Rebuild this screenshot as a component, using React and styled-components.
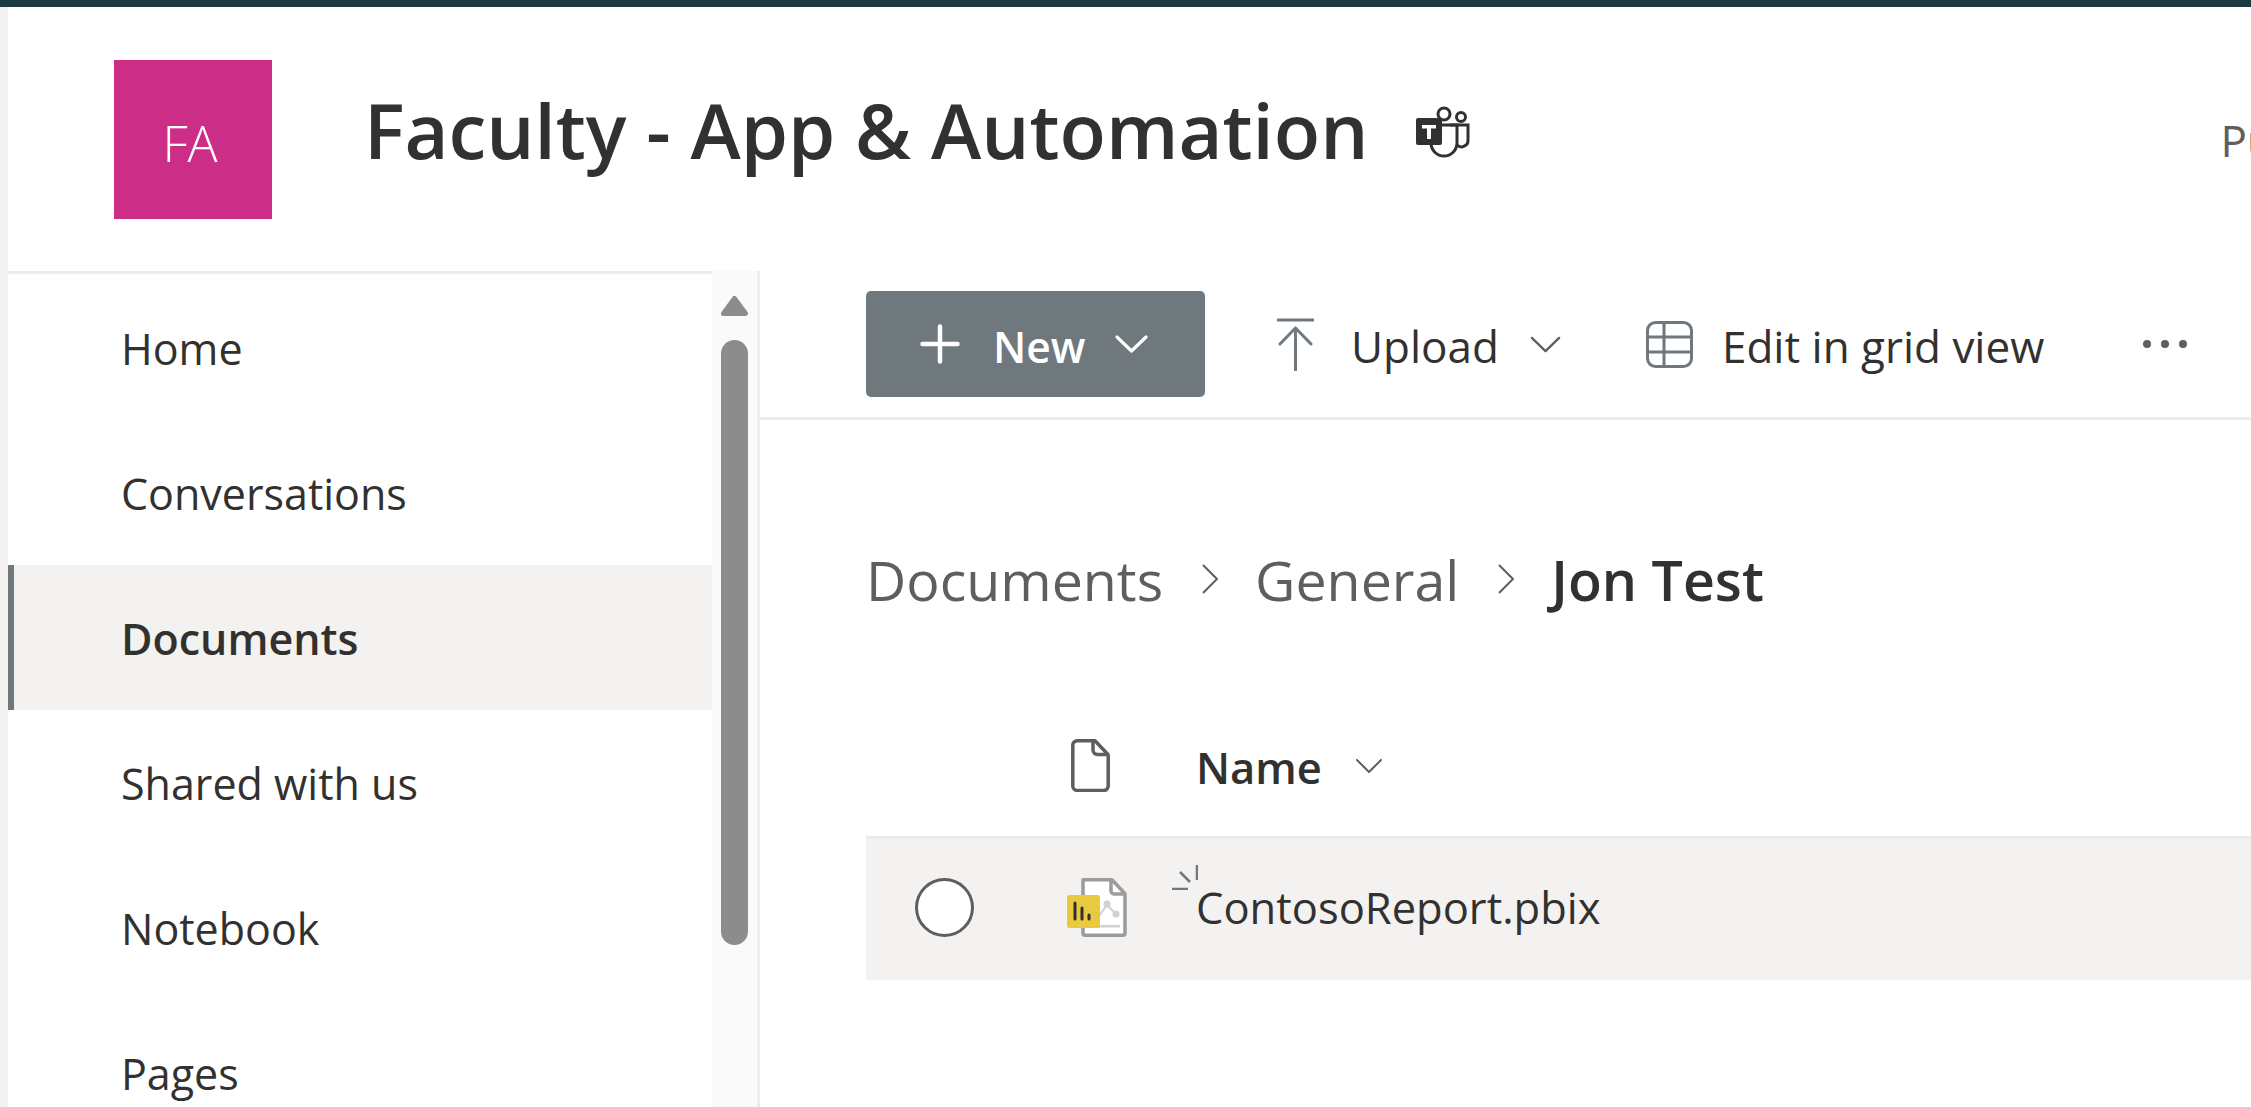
import React from 'react'
import styled, { createGlobalStyle } from 'styled-components'

const GlobalStyle = createGlobalStyle`
  html, body { margin: 0; padding: 0; background: #fff; }
  body { font-family: 'Open Sans', 'Noto Sans', sans-serif; color: #323130; }
`

const navItems = ['Home', 'Conversations', 'Documents', 'Shared with us', 'Notebook', 'Pages']

const Page = styled.div`
  width: 2251px;
  height: 1107px;
  overflow: hidden;
  border-top: 7px solid #1b3a42;
  box-sizing: border-box;
  display: flex;
  background: #fff;
`
const LeftStrip = styled.div`
  width: 8px;
  flex-shrink: 0;
  background: #f3f2f1;
`
const Shell = styled.div`
  flex: 1;
  min-width: 0;
  display: flex;
  flex-direction: column;
`
const Header = styled.header`
  height: 264px;
  flex-shrink: 0;
  display: flex;
  align-items: flex-start;
  padding: 53px 0 0 106px;
  box-sizing: border-box;
  white-space: nowrap;
  overflow: hidden;
`
const Logo = styled.div`
  width: 158px;
  height: 159px;
  flex-shrink: 0;
  box-sizing: border-box;
  padding: 6px 6px 0 0;
  background: #cc2e87;
  color: #fff;
  font-size: 50px;
  font-weight: 300;
  display: flex;
  align-items: center;
  justify-content: center;
`
const Title = styled.h1`
  margin: 21px 0 0 92px;
  font-size: 76px;
  line-height: 98px;
  font-weight: 600;
`
const TeamsIcon = styled.svg`
  width: 56px;
  height: 53px;
  margin: 45px 0 0 46px;
  flex-shrink: 0;
`
const GroupLabel = styled.span`
  margin: 53px 0 0 750px;
  font-size: 44px;
  line-height: 54px;
  color: #605e5c;
`
const Body = styled.div`
  flex: 1;
  min-height: 0;
  display: flex;
`
const Sidebar = styled.nav`
  width: 704px;
  flex-shrink: 0;
  border-top: 3px solid #ececec;
  padding-top: 1px;
`
const NavItem = styled.div`
  height: 145px;
  box-sizing: border-box;
  padding-top: 2px;
  display: flex;
  align-items: center;
  padding-left: ${(p) => (p.$active ? '107px' : '113px')};
  border-left: ${(p) => (p.$active ? '6px solid #6e787d' : 'none')};
  background: ${(p) => (p.$active ? '#f3f2f1' : 'transparent')};
  font-size: 43px;
  font-weight: ${(p) => (p.$active ? 600 : 400)};
`
const ScrollTrack = styled.div`
  width: 45px;
  flex-shrink: 0;
  background: #fafafa;
  border-right: 3px solid #eeeeee;
  display: flex;
  flex-direction: column;
  align-items: center;
  padding-top: 24px;
  gap: 24px;
`
const ScrollArrow = styled.svg`
  width: 27px;
  height: 21px;
  flex-shrink: 0;
`
const ScrollThumb = styled.div`
  width: 27px;
  height: 605px;
  flex-shrink: 0;
  background: #8c8c8c;
  border-radius: 14px;
`
const Main = styled.main`
  flex: 1;
  min-width: 0;
`
const Toolbar = styled.div`
  height: 149px;
  box-sizing: border-box;
  border-bottom: 3px solid #ececec;
  display: flex;
  align-items: flex-start;
  padding: 20px 0 0 106px;
  white-space: nowrap;
`
const NewButton = styled.button`
  width: 339px;
  height: 106px;
  border: none;
  border-radius: 5px;
  background: #6e787d;
  color: #fff;
  font: 600 42.5px 'Open Sans', sans-serif;
  display: flex;
  align-items: center;
  padding: 0 0 0 54px;
  box-sizing: border-box;
`
const NewLabel = styled.span`
  margin: 0 30px 0 33px;
  padding-top: 4px;
`
const ToolIcon = styled.svg`
  flex-shrink: 0;
  display: block;
`
const ToolAction = styled.div`
  height: 106px;
  display: flex;
  align-items: center;
  margin-left: ${(p) => p.$left}px;
  font-size: 44px;
  color: #323130;
`
const ToolText = styled.span`
  margin: 0 ${(p) => p.$right || 0}px 0 ${(p) => p.$left}px;
  padding-top: 4px;
`
const Dots = styled.div`
  height: 106px;
  margin-left: 99px;
  display: flex;
  align-items: center;
  gap: 10px;
`
const Dot = styled.span`
  width: 8px;
  height: 8px;
  border-radius: 50%;
  background: #605e5c;
`
const Breadcrumb = styled.div`
  height: 116px;
  margin-top: 101px;
  padding-left: 106px;
  display: flex;
  align-items: center;
  font-size: 55.5px;
  color: #605e5c;
  white-space: nowrap;
`
const Crumb = styled.span`
  font-weight: ${(p) => (p.$current ? 600 : 400)};
  color: ${(p) => (p.$current ? '#323130' : '#605e5c')};
`
const CrumbChevron = styled.svg`
  width: 18px;
  height: 32px;
  margin: 0 36px 0 38px;
  flex-shrink: 0;
`
const FileTable = styled.div`
  margin: 56px 0 0 106px;
`
const HeadRow = styled.div`
  height: 143px;
  display: flex;
  align-items: center;
  font-size: 43.5px;
  font-weight: 600;
`
const HeadLabel = styled.span`
  padding-top: 5px;
`
const RowIconCell = styled.div`
  width: 330px;
  padding: 2px 0 0 205px;
  box-sizing: border-box;
  flex-shrink: 0;
`
const NameChevron = styled.svg`
  width: 28px;
  height: 16px;
  margin: 3px 0 0 33px;
  flex-shrink: 0;
`
const FileRow = styled.div`
  height: 144px;
  box-sizing: border-box;
  border-top: 3px solid #edebe9;
  padding-bottom: 4px;
  background: #f3f2f1;
  display: flex;
  align-items: center;
  font-size: 43.5px;
`
const Radio = styled.span`
  width: 59px;
  height: 59px;
  box-sizing: border-box;
  margin-left: 49px;
  border: 3.5px solid #605e5c;
  border-radius: 50%;
  background: #fff;
  flex-shrink: 0;
`
const FileIconBox = styled.svg`
  width: 60px;
  height: 59px;
  margin-left: 93px;
  flex-shrink: 0;
`
const FileName = styled.span`
  position: relative;
  margin-left: 69px;
`
const Spinner = styled.svg`
  position: absolute;
  left: -24px;
  top: -14px;
  width: 26px;
  height: 26px;
`

const TeamsGlyph = () => (
  <TeamsIcon viewBox="0 0 56 53" aria-hidden="true">
    <g fill="none" stroke="#323130" strokeWidth="3">
      <circle cx="30" cy="9" r="6" />
      <circle cx="47" cy="12" r="4.5" />
      <path d="M17 30v8a13 13 0 0 0 26 0V20H27" />
      <path d="M36 20h18v15a6.500 6.500 0 0 1-11 5" />
    </g>
    <rect x="2" y="13" width="26" height="27" rx="2" fill="#323130" />
    <path d="M8 20h14v3.500h-5V34h-4V23.500H8z" fill="#fff" />
  </TeamsIcon>
)

const Chevron = ({ color = '#605e5c', width = 33, height = 18, weight = 2.5 }) => (
  <ToolIcon width={width} height={height} viewBox="0 0 33 18" preserveAspectRatio="none" aria-hidden="true">
    <path d="M2 2l14.500 14L31 2" fill="none" stroke={color} strokeWidth={weight} strokeLinecap="round" strokeLinejoin="round" />
  </ToolIcon>
)

const PbixGlyph = () => (
  <FileIconBox viewBox="0 0 60 59" aria-hidden="true">
    <path d="M16 1.800h29l13 14v39.500a2 2 0 0 1-2 2H18a2 2 0 0 1-2-2z" fill="#fff" stroke="#9e9c9a" strokeWidth="3.500" strokeLinejoin="round" />
    <path d="M44 2v11a3 3 0 0 0 3 3h11" fill="none" stroke="#9e9c9a" strokeWidth="3.500" />
    <path d="M32 38l8-11 9 9" fill="none" stroke="#d2d0ce" strokeWidth="2" />
    <circle cx="40" cy="26" r="3.500" fill="#d2d0ce" />
    <circle cx="49" cy="36" r="3.500" fill="#d2d0ce" />
    <rect x="32" y="47" width="21" height="2.500" fill="#d2d0ce" />
    <rect x="0" y="17" width="33" height="33" rx="2" fill="#e8c940" />
    <g stroke="#323130" strokeWidth="3" strokeLinecap="round">
      <path d="M8 25v16" />
      <path d="M15 30v11" />
      <path d="M22 37v4" />
    </g>
  </FileIconBox>
)

const App = () => (
  <>
    <GlobalStyle />
    <Page>
      <LeftStrip />
      <Shell>
        <Header>
          <Logo>FA</Logo>
          <Title>Faculty - App &amp; Automation</Title>
          <TeamsGlyph />
          <GroupLabel>Pu</GroupLabel>
        </Header>
        <Body>
          <Sidebar>
            {navItems.map((item) => (
              <NavItem key={item} $active={item === 'Documents'}>{item}</NavItem>
            ))}
          </Sidebar>
          <ScrollTrack>
            <ScrollArrow viewBox="0 0 27 21" aria-hidden="true">
              <path d="M13.500 3.500L24.500 18.500H2.500z" fill="#8c8c8c" stroke="#8c8c8c" strokeWidth="5" strokeLinejoin="round" />
            </ScrollArrow>
            <ScrollThumb />
          </ScrollTrack>
          <Main>
            <Toolbar>
              <NewButton>
                <ToolIcon width="40" height="40" viewBox="0 0 40 40" aria-hidden="true">
                  <path d="M20 2.500v35M2.500 20h35" stroke="#fff" strokeWidth="4.500" strokeLinecap="round" />
                </ToolIcon>
                <NewLabel>New</NewLabel>
                <Chevron color="#fff" weight={3.2} />
              </NewButton>
              <ToolAction $left={72}>
                <ToolIcon width="37" height="53" viewBox="0 0 37 53" aria-hidden="true">
                  <path d="M1 2h35" stroke="#6e787d" strokeWidth="3" strokeLinecap="round" />
                  <path d="M18.500 52V10M3 26l15.500-16L34 26" fill="none" stroke="#6e787d" strokeWidth="3" strokeLinecap="round" strokeLinejoin="round" />
                </ToolIcon>
                <ToolText $left={37} $right={31}>Upload</ToolText>
                <Chevron width={31} height={17} />
              </ToolAction>
              <ToolAction $left={85}>
                <ToolIcon width="47" height="47" viewBox="0 0 47 47" aria-hidden="true">
                  <g fill="none" stroke="#6e787d" strokeWidth="3">
                    <rect x="1.500" y="1.500" width="44" height="44" rx="8" />
                    <path d="M1.500 16h44M1.500 31h44M18 1.500v44" />
                  </g>
                </ToolIcon>
                <ToolText $left={29}>Edit in grid view</ToolText>
              </ToolAction>
              <Dots><Dot /><Dot /><Dot /></Dots>
            </Toolbar>
            <Breadcrumb>
              <Crumb>Documents</Crumb>
              <CrumbChevron viewBox="0 0 18 32" aria-hidden="true">
                <path d="M2 2l14 14L2 30" fill="none" stroke="#605e5c" strokeWidth="2" />
              </CrumbChevron>
              <Crumb>General</Crumb>
              <CrumbChevron viewBox="0 0 18 32" aria-hidden="true">
                <path d="M2 2l14 14L2 30" fill="none" stroke="#605e5c" strokeWidth="2" />
              </CrumbChevron>
              <Crumb $current>Jon Test</Crumb>
            </Breadcrumb>
            <FileTable>
              <HeadRow>
                <RowIconCell>
                  <ToolIcon width="39" height="53" viewBox="0 0 39 53" aria-hidden="true">
                    <path d="M6 1.800h18l13.200 14V47a4.500 4.500 0 0 1-4.500 4.500H6A4.500 4.500 0 0 1 1.800 47V6A4.500 4.500 0 0 1 6 1.800z" fill="none" stroke="#605e5c" strokeWidth="3.500" strokeLinejoin="round" />
                    <path d="M22 2v9a4.500 4.500 0 0 0 4.500 4.500H37" fill="none" stroke="#605e5c" strokeWidth="3.500" />
                  </ToolIcon>
                </RowIconCell>
                <HeadLabel>Name</HeadLabel>
                <NameChevron viewBox="0 0 28 16" aria-hidden="true">
                  <path d="M2 2l12 12L26 2" fill="none" stroke="#605e5c" strokeWidth="2" strokeLinecap="round" strokeLinejoin="round" />
                </NameChevron>
              </HeadRow>
              <FileRow>
                <Radio />
                <PbixGlyph />
                <FileName>
                  <Spinner viewBox="0 0 26 26" aria-hidden="true">
                    <path d="M25 1v15M8 8l10 10M0 25h16" stroke="#6e787d" strokeWidth="2.500" />
                  </Spinner>
                  ContosoReport.pbix
                </FileName>
              </FileRow>
            </FileTable>
          </Main>
        </Body>
      </Shell>
    </Page>
  </>
)

export default App
